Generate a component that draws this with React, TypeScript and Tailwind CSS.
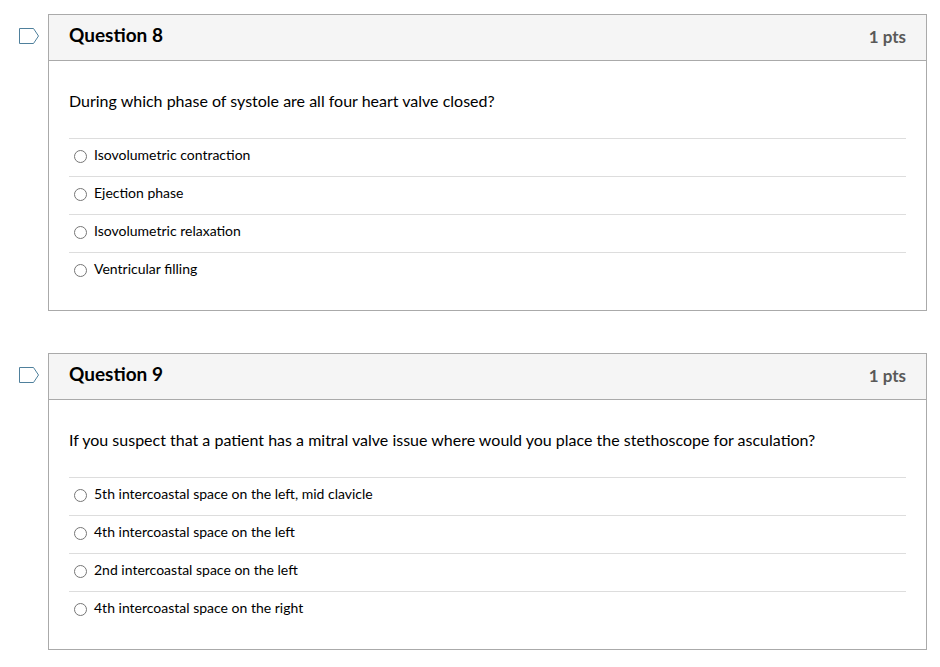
type Question = {
  id: number;
  points: number;
  text: string;
  answers: string[];
};

const questions: Question[] = [
  {
    id: 8,
    points: 1,
    text: "During which phase of systole are all four heart valve closed?",
    answers: [
      "Isovolumetric contraction",
      "Ejection phase",
      "Isovolumetric relaxation",
      "Ventricular filling",
    ],
  },
  {
    id: 9,
    points: 1,
    text: "If you suspect that a patient has a mitral valve issue where would you place the stethoscope for asculation?",
    answers: [
      "5th intercoastal space on the left, mid clavicle",
      "4th intercoastal space on the left",
      "2nd intercoastal space on the left",
      "4th intercoastal space on the right",
    ],
  },
];

function FlagButton({ questionId }: { questionId: number }) {
  return (
    <button
      type="button"
      aria-label={`Flag question ${questionId}`}
      className="mt-3 h-5 w-5 shrink-0"
    >
      <svg viewBox="0 0 20 20" className="h-5 w-5" fill="none" stroke="#4f809c">
        <path d="M0.5 2.5H14.5L19.5 10L14.5 17.5H0.5Z" />
      </svg>
    </button>
  );
}

function QuestionCard({ question }: { question: Question }) {
  return (
    <div className="flex items-start gap-[9px]">
      <FlagButton questionId={question.id} />
      <section className="min-w-0 flex-1 border border-[#aaaaaa] bg-white">
        <header className="flex items-start justify-between border-b border-[#aaaaaa] bg-[#f5f5f5] px-5 pt-2 pb-[11px]">
          <h2 className="text-[19px] leading-6 font-bold">
            Question {question.id}
          </h2>
          <span className="pt-0.5 text-[17px] leading-6 font-bold text-[#595959]">
            {question.points} pts
          </span>
        </header>

        <div className="px-5 pt-7 pb-5">
          <p id={`question-${question.id}`} className="text-[16px] leading-6">
            {question.text}
          </p>
          <div
            role="radiogroup"
            aria-labelledby={`question-${question.id}`}
            className="mt-[25px]"
          >
            {question.answers.map((answer) => (
              <label
                key={answer}
                className="flex h-[38px] items-start border-t border-[#dddddd] pl-[5px] text-[14px] leading-5"
              >
                <input
                  type="radio"
                  name={`answer-${question.id}`}
                  value={answer}
                  className="mt-[11px] mr-[7px] h-[13px] w-[13px] shrink-0"
                />
                <span className="mt-[6px]">{answer}</span>
              </label>
            ))}
          </div>
        </div>
      </section>
    </div>
  );
}

export default function App() {
  return (
    <main className="flex min-h-screen flex-col gap-[42px] bg-white pt-[14px] pr-[13px] pb-4 pl-[19px] font-['Lato',sans-serif] text-black">
      {questions.map((question) => (
        <QuestionCard key={question.id} question={question} />
      ))}
    </main>
  );
}
